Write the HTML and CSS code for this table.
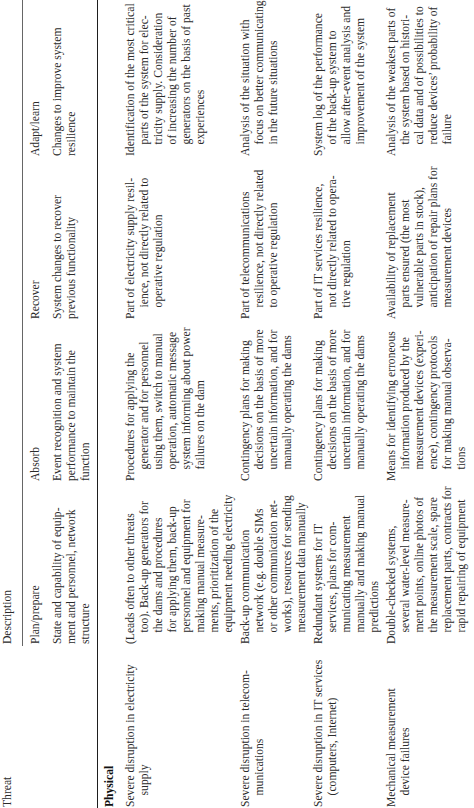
FILE: index.html
```html
<!DOCTYPE html>
<html lang="en">
<head>
<meta charset="utf-8">
<title>Threats and resilience measures</title>
<link rel="stylesheet" href="styles.css">
</head>
<body>
<div class="viewport">
  <div class="sheet">
    <div class="row head1">
      <div class="cell">Threat</div>
      <div class="cell span4">Description</div>
    </div>
    <div class="row">
      <div class="cell"></div>
      <div class="cmid span4"></div>
    </div>
    <div class="row head2">
      <div class="cell"></div>
      <div class="cell">Plan/prepare</div>
      <div class="cell">Absorb</div>
      <div class="cell">Recover</div>
      <div class="cell">Adapt/learn</div>
    </div>
    <div class="row head3">
      <div class="cell"></div>
      <div class="cell"><span class="ln">State and capability of equip-</span><span class="ln">ment and personnel, network</span><span class="ln">structure</span></div>
      <div class="cell"><span class="ln">Event recognition and system</span><span class="ln">performance to maintain the</span><span class="ln">function</span></div>
      <div class="cell"><span class="ln">System changes to recover</span><span class="ln">previous functionality</span></div>
      <div class="cell"><span class="ln">Changes to improve system</span><span class="ln">resilience</span></div>
    </div>
    <div class="rule-thick"></div>
    <div class="row section">
      <div class="cell bold">Physical</div>
    </div>
    <div class="row body">
      <div class="cell hang"><span class="ln">Severe disruption in electricity</span><span class="ln">supply</span></div>
      <div class="cell hang"><span class="ln">(Leads often to other threats</span><span class="ln">too). Back-up generators for</span><span class="ln">the dams and procedures</span><span class="ln">for applying them, back-up</span><span class="ln">personnel and equipment for</span><span class="ln">making manual measure-</span><span class="ln">ments, prioritization of the</span><span class="ln">equipment needing electricity</span></div>
      <div class="cell hang"><span class="ln">Procedures for applying the</span><span class="ln">generator and for personnel</span><span class="ln">using them, switch to manual</span><span class="ln">operation, automatic message</span><span class="ln">system informing about power</span><span class="ln">failures on the dam</span></div>
      <div class="cell hang"><span class="ln">Part of electricity supply resil-</span><span class="ln">ience, not directly related to</span><span class="ln">operative regulation</span></div>
      <div class="cell hang"><span class="ln">Identification of the most critical</span><span class="ln">parts of the system for elec-</span><span class="ln">tricity supply. Consideration</span><span class="ln">of increasing the number of</span><span class="ln">generators on the basis of past</span><span class="ln">experiences</span></div>
    </div>
    <div class="row body">
      <div class="cell hang"><span class="ln">Severe disruption in telecom-</span><span class="ln">munications</span></div>
      <div class="cell hang"><span class="ln">Back-up communication</span><span class="ln">network (e.g. double SIMs</span><span class="ln">or other communication net-</span><span class="ln">works), resources for sending</span><span class="ln">measurement data manually</span></div>
      <div class="cell hang"><span class="ln">Contingency plans for making</span><span class="ln">decisions on the basis of more</span><span class="ln">uncertain information, and for</span><span class="ln">manually operating the dams</span></div>
      <div class="cell hang"><span class="ln">Part of telecommunications</span><span class="ln">resilience, not directly related</span><span class="ln">to operative regulation</span></div>
      <div class="cell hang"><span class="ln">Analysis of the situation with</span><span class="ln">focus on better communicating</span><span class="ln">in the future situations</span></div>
    </div>
    <div class="row body">
      <div class="cell hang"><span class="ln">Severe disruption in IT services</span><span class="ln">(computers, Internet)</span></div>
      <div class="cell hang"><span class="ln">Redundant systems for IT</span><span class="ln">services, plans for com-</span><span class="ln">municating measurement</span><span class="ln">manually and making manual</span><span class="ln">predictions</span></div>
      <div class="cell hang"><span class="ln">Contingency plans for making</span><span class="ln">decisions on the basis of more</span><span class="ln">uncertain information, and for</span><span class="ln">manually operating the dams</span></div>
      <div class="cell hang"><span class="ln">Part of IT services resilience,</span><span class="ln">not directly related to opera-</span><span class="ln">tive regulation</span></div>
      <div class="cell hang"><span class="ln">System log of the performance</span><span class="ln">of the back-up system to</span><span class="ln">allow after-event analysis and</span><span class="ln">improvement of the system</span></div>
    </div>
    <div class="row body">
      <div class="cell hang"><span class="ln">Mechanical measurement</span><span class="ln">device failures</span></div>
      <div class="cell hang"><span class="ln">Double-checked systems,</span><span class="ln">several water-level measure-</span><span class="ln">ment points, online photos of</span><span class="ln">the measurement scale, spare</span><span class="ln">replacement parts, contracts for</span><span class="ln">rapid repairing of equipment</span></div>
      <div class="cell hang"><span class="ln">Means for identifying erroneous</span><span class="ln">information produced by the</span><span class="ln">measurement devices (experi-</span><span class="ln">ence), contingency protocols</span><span class="ln">for making manual observa-</span><span class="ln">tions</span></div>
      <div class="cell hang"><span class="ln">Availability of replacement</span><span class="ln">parts ensured (the most</span><span class="ln">vulnerable parts in stock),</span><span class="ln">anticipation of repair plans for</span><span class="ln">measurement devices</span></div>
      <div class="cell hang"><span class="ln">Analysis of the weakest parts of</span><span class="ln">the system based on histori-</span><span class="ln">cal data and of possibilities to</span><span class="ln">reduce devices’ probability of</span><span class="ln">failure</span></div>
    </div>
  </div>
</div>
</body>
</html>
```

FILE: styles.css
```css
html, body {
  margin: 0;
  padding: 0;
  background: #ffffff;
}

.viewport {
  width: 474px;
  height: 808px;
  overflow: hidden;
}

.sheet {
  width: 808px;
  height: 474px;
  transform-origin: 0 0;
  transform: translateY(808px) rotate(-90deg);
  font-family: "Liberation Serif", "Times New Roman", serif;
  font-size: 11.6px;
  line-height: 14px;
  color: #2b2b2b;
  padding-top: 1px;
  box-sizing: border-box;
}

.row {
  display: grid;
  grid-template-columns: 163px 163px 162px 163px 156px;
  padding-left: 1px;
}

.cell {
  white-space: nowrap;
}

.span4 {
  grid-column: 2 / 6;
}

.ln {
  display: block;
}

.hang .ln + .ln {
  padding-left: 1em;
}

.cmid {
  margin-top: 7px;
  margin-left: -2px;
  border-top: 1px solid #666;
  height: 0;
  margin-bottom: 6px;
}

.head3 {
  margin-top: 8px;
}

.rule-thick {
  margin-top: 4px;
  border-top: 1.5px solid #1e1e1e;
}

.section {
  margin-top: 5px;
}

.bold {
  font-weight: bold;
  color: #111;
}

.body {
  margin-top: 3px;
}

.section + .body {
  margin-top: 7px;
}
```
